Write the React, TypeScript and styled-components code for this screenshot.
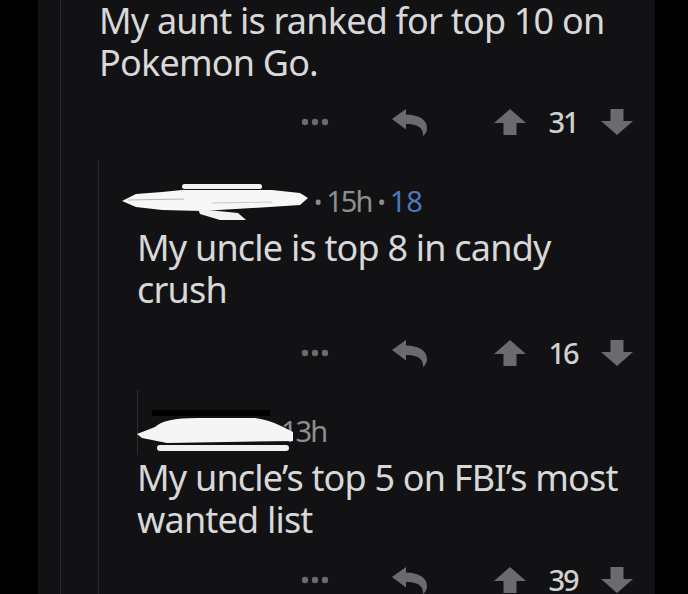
import React from "react";
import styled, { createGlobalStyle } from "styled-components";

const Global = createGlobalStyle`
  html, body { margin: 0; padding: 0; background: #000; }
  body { font-family: "Noto Sans", "Open Sans", sans-serif; }
`;

const Page = styled.div`
  width: 688px;
  height: 594px;
  overflow: hidden;
  background: #000;
  display: flex;
`;

const Panel = styled.div`
  margin-left: 38px;
  width: 617px;
  height: 594px;
  overflow: hidden;
  background: #121214;
`;

const Thread = styled.div<{ $offset: number; $top?: number }>`
  margin-left: ${(p) => p.$offset}px;
  margin-top: ${(p) => p.$top ?? 0}px;
  border-left: 1px solid #2a2a2d;
`;

const Comment = styled.div`
  padding-left: 38px;
  padding-right: 10px;
  display: flex;
  flex-direction: column;
`;

const Body = styled.p<{ $top: number }>`
  margin: ${(p) => p.$top}px 0 0 0;
  font-size: 36px;
  line-height: 42px;
  letter-spacing: -0.8px;
  color: #d8d8d8;
`;

const Header = styled.div<{ $top?: number }>`
  margin-top: ${(p) => p.$top ?? 0}px;
  height: 36px;
  display: flex;
  align-items: center;
  font-size: 29px;
  line-height: 36px;
  letter-spacing: -2px;
  color: #8e8e90;
  white-space: nowrap;
`;

const Marker = styled.div`
  margin-top: 17px;
  padding: 23px 0 6px 0;
  border-left: 1px solid #2e2e31;
`;

const Score = styled.span`
  color: #4a79bd;
  letter-spacing: 0px;
`;

const Sep = styled.span`
  margin: 0 6px;
  font-size: 22px;
`;

const Actions = styled.div<{ $top: number }>`
  margin-top: ${(p) => p.$top}px;
  margin-right: 12px;
  height: 40px;
  display: flex;
  align-items: center;
  justify-content: flex-end;
`;

const Slot = styled.div<{ $w: number; $gap: number }>`
  width: ${(p) => p.$w}px;
  margin-left: ${(p) => p.$gap}px;
  display: flex;
  align-items: center;
  justify-content: center;
`;

const Count = styled.span`
  font-size: 29px;
  font-weight: 500;
  letter-spacing: -2px;
  color: #d0d0d0;
  line-height: 40px;
`;

const ICON = "#6b6b6d";

const Dots = () => (
  <svg width="28" height="8" viewBox="0 0 28 8">
    <circle cx="4" cy="4" r="3.2" fill={ICON} />
    <circle cx="14" cy="4" r="3.2" fill={ICON} />
    <circle cx="24" cy="4" r="3.2" fill={ICON} />
  </svg>
);

const Reply = () => (
  <svg width="35" height="27" viewBox="0 0 35 27">
    <path
      d="M0 10 L14 0 L14 5.5 C26 5.5 35 10.5 35 19 C35 22.5 33.5 25 31 27 C31.5 20.5 28 15 14 15 L14 20.5 Z"
      fill={ICON}
    />
  </svg>
);

const Arrow = ({ down }: { down?: boolean }) => (
  <svg
    width="32"
    height="26"
    viewBox="0 0 32 26"
    style={down ? { transform: "rotate(180deg)" } : undefined}
  >
    <path d="M16 0 L32 14 L22.5 14 L22.5 26 L9.5 26 L9.5 14 L0 14 Z" fill={ICON} />
  </svg>
);

const ActionRow = ({ top, count }: { top: number; count: string }) => (
  <Actions $top={top}>
    <Slot $w={28} $gap={0}>
      <Dots />
    </Slot>
    <Slot $w={35} $gap={63}>
      <Reply />
    </Slot>
    <Slot $w={32} $gap={67}>
      <Arrow />
    </Slot>
    <Slot $w={30} $gap={22}>
      <Count>{count}</Count>
    </Slot>
    <Slot $w={32} $gap={23}>
      <Arrow down />
    </Slot>
  </Actions>
);

const Redact = styled.svg<{ $shift: number; $overlap?: number }>`
  flex: none;
  position: relative;
  z-index: 1;
  overflow: visible;
  margin-left: ${(p) => p.$shift}px;
  margin-right: ${(p) => -(p.$overlap ?? 0)}px;
`;

const ScribbleA = () => (
  <Redact $shift={-15} width="186" height="40" viewBox="0 0 186 40">
    <rect x="60" y="3" width="80" height="5" rx="2.5" fill="#f4f4f4" />
    <path
      d="M0 20 L14 13 L40 11 L60 9 L150 9 L178 12 L186 17 L178 24 L130 27 L80 30 L40 29 L14 26 Z"
      fill="#f7f7f7"
    />
    <path d="M76 28 L116 32 L124 39 L98 39 L78 33 Z" fill="#f2f2f2" />
    <line x1="6" y1="19" x2="62" y2="18" stroke="#b5b5b5" strokeWidth="1" />
    <line x1="90" y1="22" x2="150" y2="21" stroke="#c8c8c8" strokeWidth="1" />
  </Redact>
);

const ScribbleB = () => (
  <Redact $shift={-1} $overlap={12} width="156" height="42" viewBox="0 0 156 42">
    <rect x="15" y="0" width="118" height="6" fill="#000" />
    <path
      d="M0 24 L18 17 C24 11 38 8 60 8 L118 8 C134 10 144 16 156 22 L156 31 L30 33 L5 28 Z"
      fill="#f5f5f5"
    />
    <rect x="20" y="35" width="132" height="6" rx="3" fill="#f1f1f1" />
  </Redact>
);

export default function App() {
  return (
    <Page>
      <Global />
      <Panel>
        <Thread $offset={22}>
          <Comment>
            <Body $top={0}>My aunt is ranked for top 10 on Pokemon Go.</Body>
            <ActionRow top={18} count="31" />
          </Comment>
          <Thread $offset={37} $top={18}>
            <Comment>
              <Header $top={23}>
                <ScribbleA />
                <Sep>•</Sep>15h<Sep>•</Sep>
                <Score>18</Score>
              </Header>
              <Body $top={8}>My uncle is top 8 in candy crush</Body>
              <ActionRow top={22} count="16" />
            </Comment>
            <Comment>
              <Marker>
                <Header>
                  <ScribbleB />
                  13h
                </Header>
              </Marker>
              <Body $top={2}>My uncle’s top 5 on FBI’s most wanted list</Body>
              <ActionRow top={19} count="39" />
            </Comment>
          </Thread>
        </Thread>
      </Panel>
    </Page>
  );
}
